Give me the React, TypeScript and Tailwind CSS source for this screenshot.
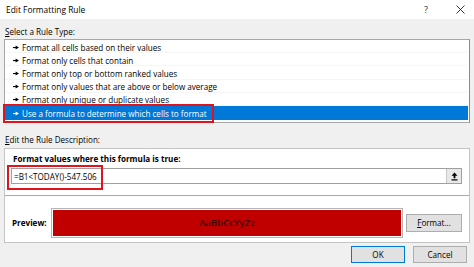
import React from "react";

const Arrow = ({ color = "#000" }: { color?: string }) => (
  <svg width="6" height="5" viewBox="0 0 6 5" className="shrink-0">
    <rect x="0" y="2" width="3.5" height="1.1" fill={color} />
    <polygon points="2.6,0.5 6,2.55 2.6,4.6" fill={color} />
  </svg>
);

const rows = [
  "Format all cells based on their values",
  "Format only cells that contain",
  "Format only top or bottom ranked values",
  "Format only values that are above or below average",
  "Format only unique or duplicate values",
];

export default function App() {
  return (
    <div
      className="relative w-[474px] h-[267px] overflow-hidden bg-[#f0f0f0] text-black text-[8.1px]"
      style={{ fontFamily: '"Open Sans", "Noto Sans", sans-serif' }}
    >
      {/* title bar */}
      <div className="h-[19px] bg-white flex items-center">
        <div className="pl-[6px] leading-[11px] text-[8.4px]">Edit Formatting Rule</div>
        <div className="ml-auto flex items-center gap-[6px]">
          <div className="w-[28px] flex justify-center text-[9px] text-[#333]">?</div>
          <div className="w-[28px] flex justify-center">
            <svg width="9" height="9" viewBox="0 0 9 9">
              <path d="M0.5 0.5 L8.5 8.5 M8.5 0.5 L0.5 8.5" stroke="#222" strokeWidth="0.9" />
            </svg>
          </div>
        </div>
      </div>

      <div className="px-[4px]">
        <div className="pt-[7px] pl-[1px] leading-[11px] mb-[2px]">
          <span className="underline">S</span>elect a Rule Type:
        </div>
        <div className="h-[84px] bg-white border border-[#a6a6a6] border-r-[#8a8a8a] pr-[1px]">
          {rows.map((r) => (
            <div
              key={r}
              className="h-[13.2px] flex items-center gap-[3px] pl-[8px] pt-[2px] leading-[11px] border-b border-[#f6f6f6]"
            >
              <Arrow />
              <span className="whitespace-nowrap">{r}</span>
            </div>
          ))}
          <div className="h-[14px] flex items-center gap-[3px] pl-[8px] pt-[2px] leading-[11px] bg-[#0078d7] text-white">
            <Arrow color="#fff" />
            <span className="whitespace-nowrap">Use a formula to determine which cells to format</span>
          </div>
        </div>

        <div className="pt-[11px] pl-[1px] leading-[11px] mb-[3px]">
          <span className="underline">E</span>dit the Rule Description:
        </div>
        <div className="h-[95px] bg-white border border-[#c4c4c4] flex flex-col">
          <div className="h-[47px] border-b border-[#a9a9a9] pl-[6px] pr-[7px]">
            <div className="pt-[3.5px] pl-[2px] leading-[11px] font-bold">Format values where this formula is true:</div>
            <div className="mt-[4.5px] h-[16px] border border-[#a0a0a0] flex items-center">
              <span className="pl-[2px] leading-[11px] whitespace-nowrap">=B1&lt;TODAY()-547.506</span>
              <div className="ml-auto h-[14px] w-[15px] bg-[#e8e8e8] border-l border-[#c8c8c8] flex items-center justify-center">
                <svg width="7" height="9" viewBox="0 0 7 9">
                  <polygon points="3.5,0.5 6.5,3.8 4.4,3.8 4.4,6.2 2.6,6.2 2.6,3.8 0.5,3.8" fill="#000" />
                  <rect x="0.5" y="7.3" width="6" height="1.2" fill="#000" />
                </svg>
              </div>
            </div>
          </div>
          <div className="flex-1 flex items-center pt-[7px] pl-[7px] pr-[7px]">
            <div className="w-[39px] font-bold leading-[11px]">Preview:</div>
            <div className="w-[352px] h-[30px] border border-[#b5b5b5] p-[1px] bg-white">
              <div className="w-full h-full bg-[#c00000] flex items-center justify-center text-[#3d0000] font-semibold text-[9.5px] leading-[11px]">
                AaBbCcYyZz
              </div>
            </div>
            <div className="ml-auto w-[56px] h-[18px] bg-[#e1e1e1] border border-[#adadad] flex items-center justify-center leading-[11px]">
              <span className="underline">F</span>ormat...
            </div>
          </div>
        </div>

        <div className="mt-[3px] flex justify-end gap-[8px] pr-[3px]">
          <div className="w-[54px] h-[17px] bg-[#e1e1e1] border border-[#0078d7] flex items-center justify-center leading-[11px]">
            OK
          </div>
          <div className="w-[54px] h-[17px] bg-[#e1e1e1] border border-[#adadad] flex items-center justify-center leading-[11px]">
            Cancel
          </div>
        </div>
      </div>

      {/* red annotation boxes */}
      <div className="absolute left-[3px] top-[104px] w-[211px] h-[19px] border-2 border-[#e0141e]" />
      <div className="absolute left-[7px] top-[165px] w-[96px] h-[25px] border-2 border-[#e0141e]" />
    </div>
  );
}
